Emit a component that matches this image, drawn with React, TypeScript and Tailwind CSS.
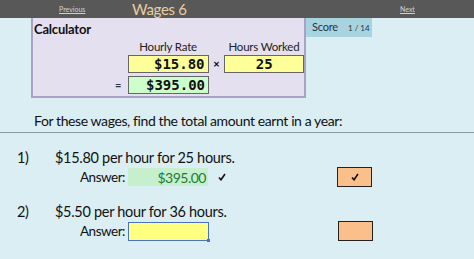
import React from 'react';

const sans = { fontFamily: 'Lato, "Open Sans", sans-serif' };
const mono = { fontFamily: '"DejaVu Sans Mono", monospace' };

function Check() {
  return (
    <svg width="8" height="8" viewBox="0 0 8 8">
      <path d="M1 4.5 L3 6.8 L7 1" fill="none" stroke="#111" strokeWidth="1.6" />
    </svg>
  );
}

function Question({ num, text, answer }: { num: string; text: string; answer?: string }) {
  return (
    <div className="flex flex-col">
      <div className="flex h-[18px] items-center text-[14.5px] tracking-[-0.3px] text-[#111]">
        <span className="ml-[17px] w-[38px]">{num}</span>
        <span className="whitespace-nowrap">{text}</span>
      </div>
      <div className="flex h-[20px] items-center">
        <span className="ml-[80px] w-[48px] whitespace-nowrap text-[13.5px] tracking-[-0.5px] text-[#111]">Answer:</span>
        {answer ? (
          <div className="w-[80px] h-[18px] bg-[#c6efce] flex items-center justify-end pr-[2px] text-[14px] tracking-[-0.5px] text-[#1e7a34]">
            {answer}
          </div>
        ) : (
          <div className="relative w-[81px] h-[19px] bg-[#ffff80] border border-[#4a72c0]">
            <div className="absolute -right-[2px] -bottom-[2px] w-[3px] h-[3px] bg-[#4a72c0]" />
          </div>
        )}
        <div className="w-[129px] pl-[10px] flex items-center">{answer ? <Check /> : null}</div>
        <div className="w-[35px] h-[20px] bg-[#fbbf8c] border-[1.5px] border-[#222] flex items-center justify-center">
          {answer ? <Check /> : null}
        </div>
      </div>
    </div>
  );
}

export default function App() {
  return (
    <div className="w-[474px] h-[259px] bg-[#daeef3] overflow-hidden" style={sans}>
      <div className="h-[18px] bg-[#585858] flex items-center">
        <span className="ml-[59px] w-[73px] text-[7px] text-[#d0d0d0] underline">Previous</span>
        <span className="w-[268px] text-[15px] tracking-[-0.3px] leading-none text-[#e9cca2]">Wages 6</span>
        <span className="text-[7px] text-[#d0d0d0] underline">Next</span>
      </div>
      <div className="flex items-start">
        <div className="ml-[31px] w-[275px] h-[80px] bg-[#e5e0f0] border-2 border-[#aaa1c6] border-t-0 flex flex-col">
          <div className="h-[22px] pl-[1px] pt-[2px] text-[13px] tracking-[-0.2px] font-bold text-[#111]">Calculator</div>
          <div className="flex h-[14px] items-center text-[11.5px] tracking-[-0.2px] text-[#222]">
            <span className="ml-[95px] w-[81px] text-center">Hourly Rate</span>
            <span className="w-[16px]" />
            <span className="w-[81px] text-center whitespace-nowrap">Hours Worked</span>
          </div>
          <div className="flex items-center mt-[1px] h-[18px]">
            <div
              className="ml-[95px] w-[81px] h-[18px] bg-[#ffff99] border border-[#666] flex items-center justify-end pr-[3px] text-[14px] font-bold text-[#111]"
              style={mono}
            >
              $15.80
            </div>
            <span className="w-[16px] text-center text-[11px] font-bold">×</span>
            <div
              className="w-[80px] h-[18px] bg-[#ffff99] border border-[#666] flex items-center justify-center text-[14px] font-bold text-[#111]"
              style={mono}
            >
              25
            </div>
          </div>
          <div className="flex items-center mt-[3px] h-[18px]">
            <span className="ml-[82px] w-[13px] text-[11px] font-bold text-[#333]">=</span>
            <div
              className="w-[81px] h-[18px] bg-[#ccffcc] border border-[#666] flex items-center justify-end pr-[3px] text-[14px] font-bold text-[#111]"
              style={mono}
            >
              $395.00
            </div>
          </div>
        </div>
        <div className="w-[66px] h-[19px] bg-[#a8d4e0] flex items-center">
          <span className="ml-[6px] w-[36px] text-[11px] tracking-[-0.2px] text-[#1f3440]">Score</span>
          <span className="text-[8px] text-[#1f3440]">1 / 14</span>
        </div>
      </div>
      <div className="h-[35px] border-b border-[#8c9aa0] flex items-center pt-[11px]">
        <span className="ml-[34px] text-[14px] tracking-[-0.4px] whitespace-nowrap text-[#111]">
          For these wages, find the total amount earnt in a year:
        </span>
      </div>
      <div className="mt-[16px] flex flex-col gap-[16px]">
        <Question num="1)" text="$15.80 per hour for 25 hours." answer="$395.00" />
        <Question num="2)" text="$5.50 per hour for 36 hours." />
      </div>
    </div>
  );
}
